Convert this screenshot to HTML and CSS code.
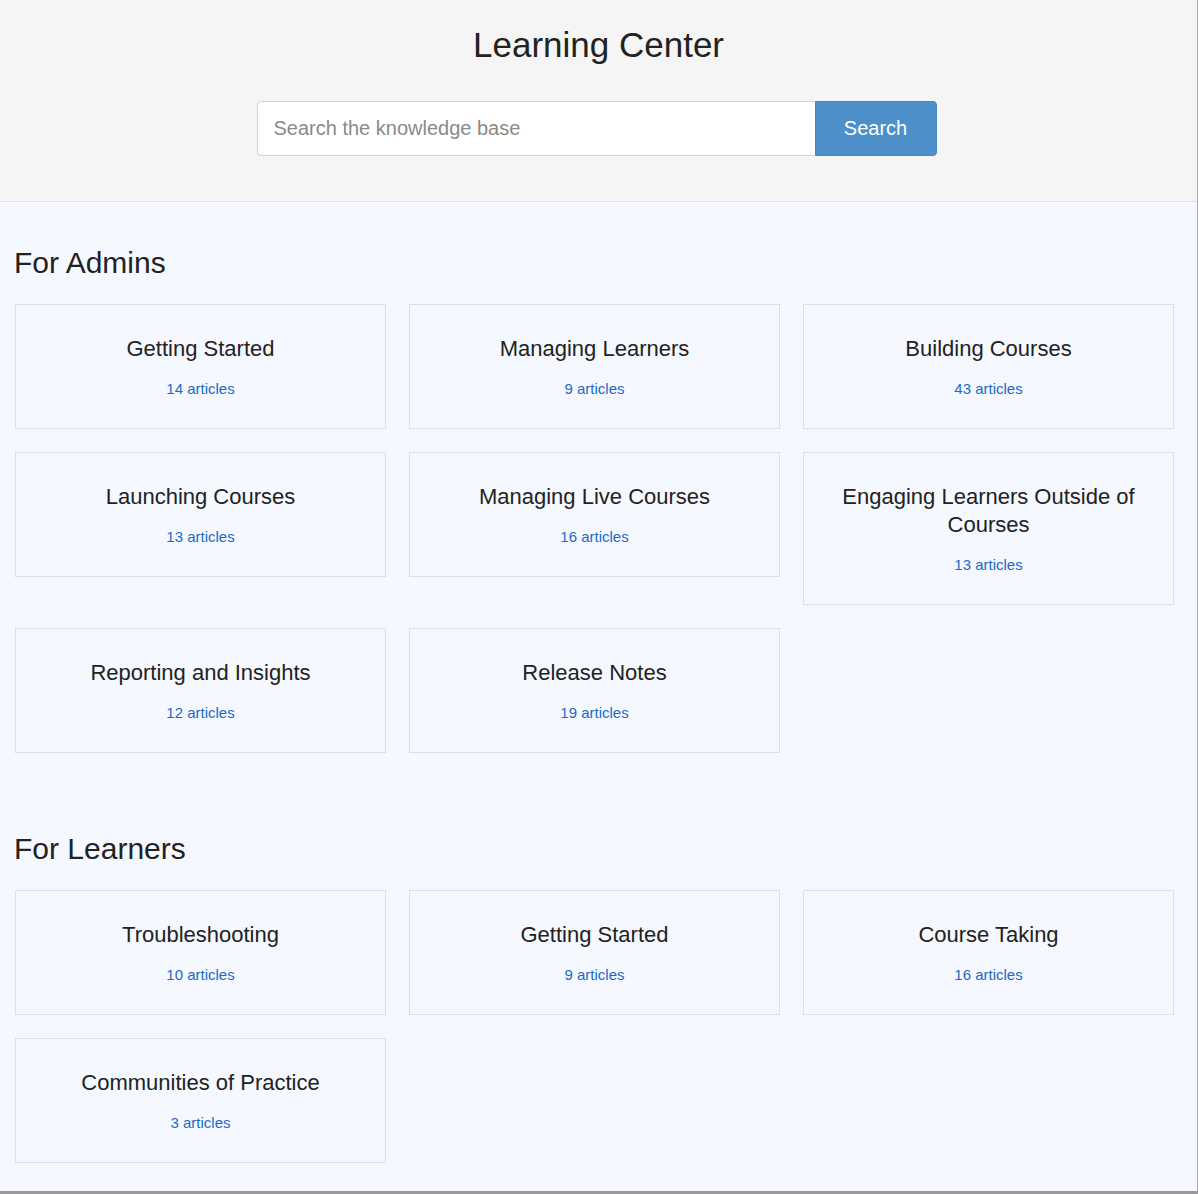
FILE: index.html
```html
<!DOCTYPE html>
<html lang="en">
<head>
    <meta charset="UTF-8">
    <title>Learning Center</title>
    <link rel="stylesheet" href="styles.css">
</head>
<body>
<div class="page">
    <header class="hero">
        <h1>Learning Center</h1>
        <form class="search" onsubmit="return false">
            <input type="text" placeholder="Search the knowledge base">
            <button type="submit">Search</button>
        </form>
    </header>

    <main class="content">
        <section class="group">
            <h2>For Admins</h2>
            <div class="cards">
                <a class="card" href="#"><span class="card-title">Getting Started</span><span class="count">14 articles</span></a>
                <a class="card" href="#"><span class="card-title">Managing Learners</span><span class="count">9 articles</span></a>
                <a class="card" href="#"><span class="card-title">Building Courses</span><span class="count">43 articles</span></a>
                <a class="card" href="#"><span class="card-title">Launching Courses</span><span class="count">13 articles</span></a>
                <a class="card" href="#"><span class="card-title">Managing Live Courses</span><span class="count">16 articles</span></a>
                <a class="card" href="#"><span class="card-title">Engaging Learners Outside of Courses</span><span class="count">13 articles</span></a>
                <a class="card" href="#"><span class="card-title">Reporting and Insights</span><span class="count">12 articles</span></a>
                <a class="card" href="#"><span class="card-title">Release Notes</span><span class="count">19 articles</span></a>
            </div>
        </section>

        <section class="group">
            <h2>For Learners</h2>
            <div class="cards">
                <a class="card" href="#"><span class="card-title">Troubleshooting</span><span class="count">10 articles</span></a>
                <a class="card" href="#"><span class="card-title">Getting Started</span><span class="count">9 articles</span></a>
                <a class="card" href="#"><span class="card-title">Course Taking</span><span class="count">16 articles</span></a>
                <a class="card" href="#"><span class="card-title">Communities of Practice</span><span class="count">3 articles</span></a>
            </div>
        </section>
    </main>
</div>
</body>
</html>
```

FILE: styles.css
```css
html, body {
    margin: 0;
    padding: 0;
}

body {
    font-family: "Liberation Sans", Arial, sans-serif;
    color: #222;
    background: #f5f8fe;
}

.page {
    width: 1197px;
    height: 1191px;
    overflow: hidden;
    border-right: 1px solid #a8a8a8;
    border-bottom: 3px solid #9a9a9a;
    background: #f5f8fe;
}

/* 顶部搜索区 */
.hero {
    height: 201px;
    background: #f5f5f5;
    border-bottom: 1px solid #e3e3e3;
    text-align: center;
}

.hero h1 {
    margin: 0;
    padding-top: 25px;
    font-size: 35px;
    font-weight: normal;
    line-height: 40px;
    color: #222;
}

.search {
    display: flex;
    width: 680px;
    height: 55px;
    margin: 36px auto 0;
    transform: translateX(-2px);
}

.search input {
    flex: 1;
    min-width: 0;
    height: 55px;
    box-sizing: border-box;
    padding: 0 16px;
    border: 1px solid #d4d4d4;
    border-right: 0;
    border-radius: 4px 0 0 4px;
    background: #fff;
    font-family: inherit;
    font-size: 20px;
    color: #333;
    outline: none;
}

.search input::placeholder {
    color: #8a8a8a;
}

.search button {
    width: 122px;
    height: 55px;
    border: 1px solid #4787c2;
    border-radius: 0 4px 4px 0;
    background: #4d90c9;
    color: #fff;
    font-family: inherit;
    font-size: 20px;
    cursor: pointer;
}

/* 分类卡片 */
.content {
    padding: 43px 23px 0 15px;
}

.group {
    margin-bottom: 78px;
}

.group h2 {
    margin: 0 0 24px -1px;
    font-size: 30px;
    font-weight: normal;
    line-height: 35px;
    color: #222;
}

.cards {
    display: grid;
    grid-template-columns: repeat(3, 371px);
    gap: 23px;
    align-items: start;
}

.card {
    display: flex;
    flex-direction: column;
    align-items: center;
    padding: 30px 22px 29px;
    border: 1px solid #dedfe2;
    background: #f5f8fe;
    text-align: center;
    text-decoration: none;
}

.card-title {
    font-size: 22px;
    line-height: 28px;
    color: #222;
}

.count {
    margin-top: 16px;
    font-size: 15px;
    line-height: 20px;
    color: #1b6ac9;
}
```
